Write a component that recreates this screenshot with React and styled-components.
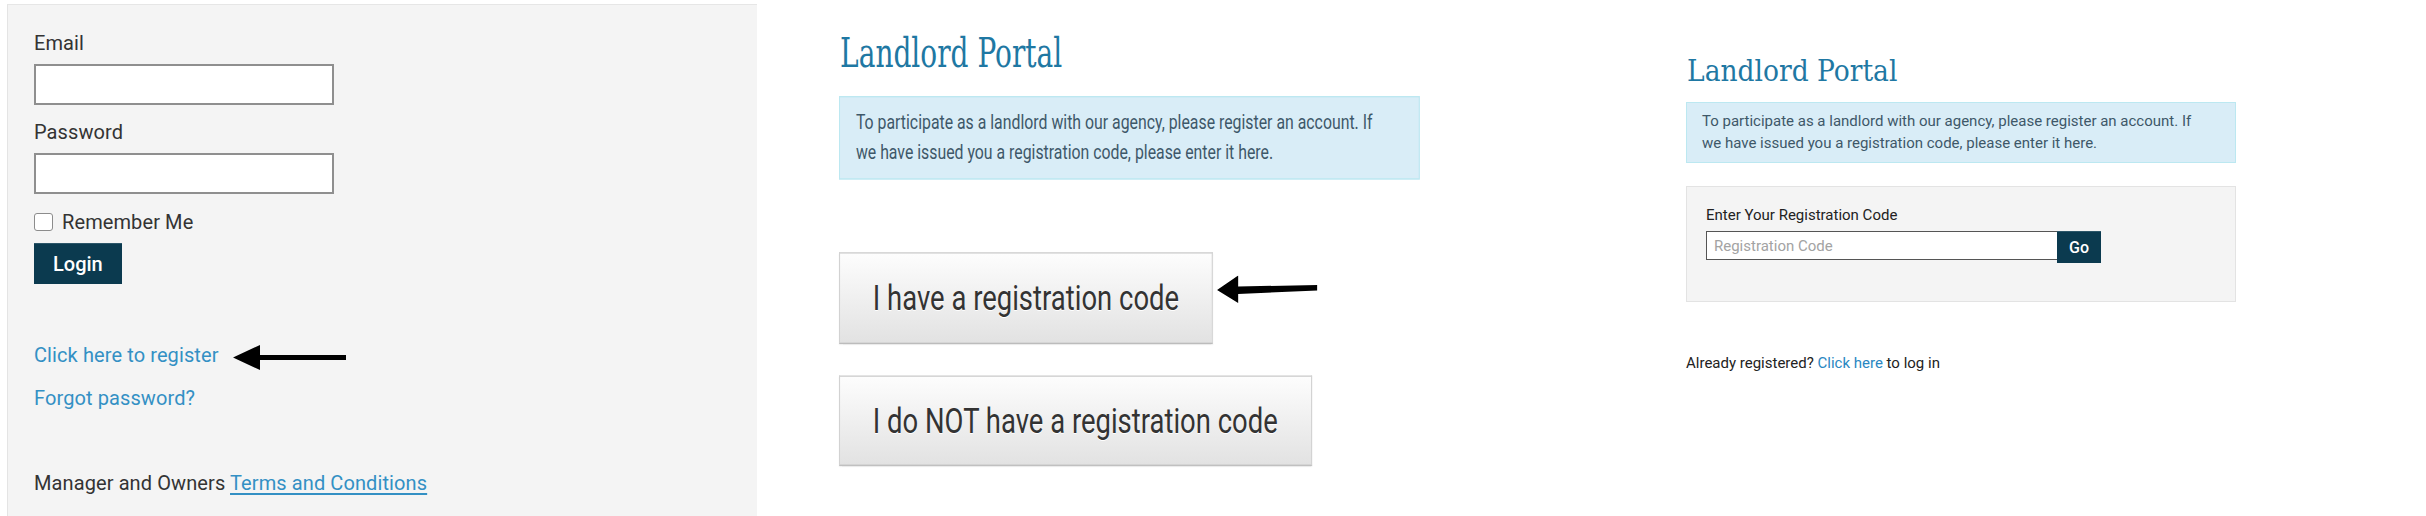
import React from 'react';
import styled, { createGlobalStyle } from 'styled-components';

const GlobalStyle = createGlobalStyle`
  html, body {
    margin: 0;
    padding: 0;
    background: #fff;
  }
  body {
    font-family: Roboto, "Liberation Sans", Arial, sans-serif;
    color: #333;
  }
`;

const Page = styled.div`
  display: grid;
  grid-template-columns: 750px 929px 1fr;
  padding-left: 7px;
  height: 516px;
  overflow: hidden;
`;

/* ---------- left: login form ---------- */

const LoginPanel = styled.div`
  margin-top: 4px;
  min-height: 540px;
  background: #f4f4f4;
  border-top: 1px solid #e6e6e6;
  border-left: 1px solid #e4e4e4;
  padding: 24px 26px 0;
  font-size: 20px;
  line-height: 28px;
  letter-spacing: 0.1px;
  color: #333;
`;

const Label = styled.div`
  margin-bottom: 7px;
`;

const TextInput = styled.input`
  display: block;
  box-sizing: border-box;
  width: 300px;
  height: 41px;
  margin: 0 0 13px;
  border: 2px solid #8f8f8f;
  background: #fff;
  font: inherit;
`;

const CheckRow = styled.label`
  display: flex;
  align-items: center;
  gap: 9px;
  margin-top: 14px;
`;

const CheckBox = styled.input`
  appearance: none;
  margin: 0;
  width: 19px;
  height: 18px;
  border: 1px solid #8c8c8c;
  border-radius: 3px;
  background: #fff;
`;

const LoginButton = styled.button`
  display: block;
  margin-top: 7px;
  height: 41px;
  padding: 0 19px;
  border: 0;
  border-top: 1px solid #2c5669;
  background: #0b3a4f;
  color: #fff;
  font: 500 20px/1 Roboto, "Liberation Sans", sans-serif;
`;

const LinkRow = styled.div`
  display: flex;
  align-items: center;
  gap: 14px;
  margin-top: ${(p) => p.$top}px;
`;

const TextLink = styled.a`
  color: ${(p) => p.$color || '#3390c4'};
  text-decoration: ${(p) => (p.$underline ? 'underline' : 'none')};
  text-underline-offset: 3px;
  cursor: pointer;
`;

const Footnote = styled.div`
  margin-top: ${(p) => p.$top}px;
`;

/* ---------- portal columns ---------- */

const PortalColumn = styled.div`
  padding-top: ${(p) => p.$top}px;
  padding-left: ${(p) => p.$left}px;
  font-size: 15px;
  line-height: 22px;
`;

// the middle screenshot is the same page, stretched
const Stretch = styled.div`
  width: 550px;
  transform: scale(${(p) => p.$sx}, ${(p) => p.$sy});
  transform-origin: 0 0;
`;

const Title = styled.h1`
  margin: 0 0 16px 1px;
  font-family: "DejaVu Serif Condensed", "DejaVu Serif", serif;
  font-stretch: condensed;
  font-weight: 400;
  font-size: 29.5px;
  line-height: 30px;
  color: #1f78a3;
`;

const InfoBox = styled.div`
  box-sizing: border-box;
  width: 550px;
  padding: 7px 40px 8px 15px;
  background: #d9edf7;
  border: 1px solid #bce8f1;
  color: #3e5869;
`;

const ChoiceRow = styled.div`
  display: flex;
  align-items: flex-start;
  margin-top: ${(p) => p.$top}px;
`;

const ChoiceButton = styled.button`
  display: inline-flex;
  align-items: center;
  height: 66.5px;
  padding: 0 31px;
  border: 1px solid #d2d2d2;
  border-bottom-color: #bcbcbc;
  background-image: linear-gradient(to bottom, #fdfdfd 0%, #e2e2e2 100%);
  box-shadow: 0 1px 1px rgba(0, 0, 0, 0.08);
  color: #333;
  text-shadow: 0 1px 0 #fff;
  font: 400 26px/1 Roboto, "Liberation Sans", sans-serif;
  white-space: nowrap;
`;

const Well = styled.div`
  box-sizing: border-box;
  width: 550px;
  margin-top: 23px;
  padding: 18px 19px 38px;
  background: #f4f4f4;
  border: 1px solid #e3e3e3;
`;

const WellLabel = styled.div`
  font-size: 15px;
  line-height: 21px;
  color: #222;
  margin-bottom: 5px;
`;

const CodeRow = styled.div`
  display: flex;
  align-items: flex-start;
`;

const CodeInput = styled.input`
  box-sizing: border-box;
  width: 351px;
  height: 29px;
  margin: 0;
  padding: 0 7px;
  border: 1px solid #555;
  border-right: 0;
  background: #fff;
  font: 400 15px Roboto, "Liberation Sans", sans-serif;
  color: #333;
  &::placeholder {
    color: #a3a3a3;
  }
`;

const GoButton = styled.button`
  height: 32px;
  width: 44px;
  padding: 0;
  border: 0;
  border-top: 1px solid #2c5669;
  background: #0b3a4f;
  color: #fff;
  font: 500 16px/1 Roboto, "Liberation Sans", sans-serif;
`;

const AlreadyLine = styled.div`
  margin-top: 50px;
  color: #222;
`;

const ArrowSvg = styled.svg`
  display: block;
  flex: none;
  margin-left: ${(p) => p.$ml || 0}px;
  margin-top: ${(p) => p.$mt || 0}px;
`;

function BigArrow() {
  return (
    <ArrowSvg width="113" height="25" viewBox="0 0 113 25" $mt={5}>
      <path d="M0 12.5 L27 0 L27 10 L113 10 L113 15 L27 15 L27 25 Z" fill="#000" />
    </ArrowSvg>
  );
}

function SmallArrow() {
  return (
    <ArrowSvg width="95" height="20" viewBox="0 0 95 20" $ml={4} $mt={17}>
      <path d="M0 10.5 L20 0 L20 8 L95 7 L95 11 L20 13.5 L20 20 Z" fill="#000" />
    </ArrowSvg>
  );
}

function Intro() {
  return (
    <>
      <Title>Landlord Portal</Title>
      <InfoBox>
        To participate as a landlord with our agency, please register an account. If
        we have issued you a registration code, please enter it here.
      </InfoBox>
    </>
  );
}

export default function App() {
  return (
    <>
      <GlobalStyle />
      <Page>
        <LoginPanel>
          <Label>Email</Label>
          <TextInput type="text" />
          <Label>Password</Label>
          <TextInput type="password" />
          <CheckRow>
            <CheckBox type="checkbox" />
            Remember Me
          </CheckRow>
          <LoginButton type="button">Login</LoginButton>
          <LinkRow $top={56}>
            <TextLink>Click here to register</TextLink>
            <BigArrow />
          </LinkRow>
          <LinkRow $top={14}>
            <TextLink>Forgot password?</TextLink>
          </LinkRow>
          <Footnote $top={57}>
            Manager and Owners <TextLink $underline>Terms and Conditions</TextLink>
          </Footnote>
        </LoginPanel>

        <PortalColumn $top={33} $left={82}>
          <Stretch $sx={1.056} $sy={1.37}>
            <Intro />
            <ChoiceRow $top={53}>
              <ChoiceButton type="button">I have a registration code</ChoiceButton>
              <SmallArrow />
            </ChoiceRow>
            <ChoiceRow $top={23}>
              <ChoiceButton type="button">I do NOT have a registration code</ChoiceButton>
            </ChoiceRow>
          </Stretch>
        </PortalColumn>

        <PortalColumn $top={56} $left={0}>
          <Intro />
          <Well>
            <WellLabel>Enter Your Registration Code</WellLabel>
            <CodeRow>
              <CodeInput type="text" placeholder="Registration Code" />
              <GoButton type="button">Go</GoButton>
            </CodeRow>
          </Well>
          <AlreadyLine>
            Already registered? <TextLink $color="#2a87c2">Click here</TextLink> to log in
          </AlreadyLine>
        </PortalColumn>
      </Page>
    </>
  );
}
